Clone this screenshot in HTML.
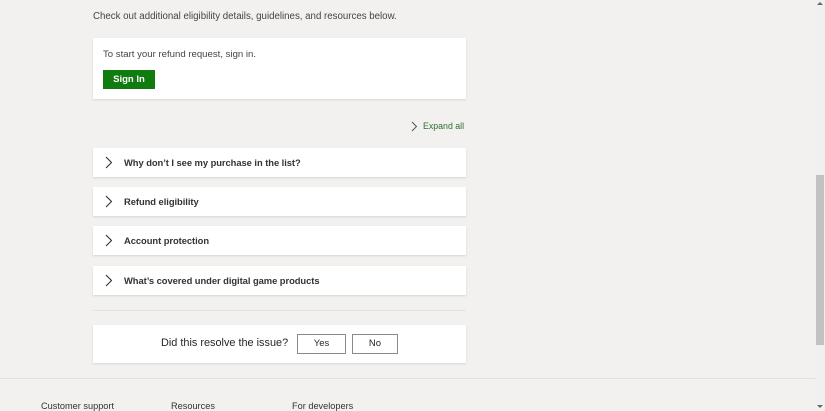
<!DOCTYPE html>
<html><head><meta charset="utf-8"><style>
*{margin:0;padding:0;box-sizing:border-box}
body{width:825px;height:411px;overflow:hidden;background:#f2f1f0;font-family:"Liberation Sans",sans-serif;color:#262626;position:relative}
.abs{position:absolute}
.card{position:absolute;left:93px;width:373px;background:#fff;box-shadow:0 1px 2px rgba(0,0,0,.12)}
.acc{height:29px;font-size:9.4px;font-weight:bold;color:#333;letter-spacing:-0.05px}
.acc span{position:absolute;left:31px;top:9px}
.acc svg{position:absolute;left:12px;top:8px}
.btn{position:absolute;border:1px solid #8a8a8a;background:#fff;font-size:9.5px;text-align:center;line-height:18px;height:20px}
</style></head><body>
<div class="abs" style="left:93px;top:11px;font-size:9.7px;color:#444">Check out additional eligibility details, guidelines, and resources below.</div>
<div class="card" style="top:38px;height:61px">
  <div class="abs" style="left:10px;top:11px;font-size:9.6px;color:#444">To start your refund request, sign in.</div>
  <div class="abs" style="left:10px;top:32px;width:52px;height:19px;background:#107c10;color:#fff;font-size:9.5px;font-weight:bold;text-align:center;line-height:19px">Sign In</div>
</div>
<svg class="abs" style="left:410px;top:121px" width="8" height="11"><path d="M2 1l4.5 4.5L2 10" fill="none" stroke="#555" stroke-width="1"/></svg>
<div class="abs" style="left:423px;top:121px;font-size:8.8px;color:#2f6e2f">Expand all</div>
<div class="card acc" style="top:148px"><svg width="8" height="13"><path d="M1 1l5.5 5.5L1 12" fill="none" stroke="#333" stroke-width="1.1"/></svg><span>Why don’t I see my purchase in the list?</span></div>
<div class="card acc" style="top:187px"><svg width="8" height="13"><path d="M1 1l5.5 5.5L1 12" fill="none" stroke="#333" stroke-width="1.1"/></svg><span>Refund eligibility</span></div>
<div class="card acc" style="top:226px"><svg width="8" height="13"><path d="M1 1l5.5 5.5L1 12" fill="none" stroke="#333" stroke-width="1.1"/></svg><span>Account protection</span></div>
<div class="card acc" style="top:266px"><svg width="8" height="13"><path d="M1 1l5.5 5.5L1 12" fill="none" stroke="#333" stroke-width="1.1"/></svg><span>What’s covered under digital game products</span></div>
<div class="abs" style="left:93px;top:310px;width:373px;height:1px;background:#e4e3e2"></div>
<div class="card" style="top:325px;height:38px">
  <div class="abs" style="left:68px;top:12px;font-size:10.9px;color:#262626">Did this resolve the issue?</div>
  <div class="btn" style="left:204px;top:9px;width:49px">Yes</div>
  <div class="btn" style="left:259px;top:9px;width:46px">No</div>
</div>
<div class="abs" style="left:0;top:378px;width:815px;height:1px;background:#e2e1e0"></div>
<div class="abs" style="left:41px;top:401px;font-size:9.2px;color:#333">Customer support</div>
<div class="abs" style="left:171px;top:401px;font-size:9.2px;color:#333">Resources</div>
<div class="abs" style="left:292px;top:401px;font-size:9.2px;color:#333">For developers</div>
<div class="abs" style="left:815px;top:0;width:10px;height:411px;background:#f0f0f0"></div>
<div class="abs" style="left:816px;top:175px;width:8px;height:170px;background:#c2c2c2"></div>
<div class="abs" style="left:817px;top:2px;width:0;height:0;border-left:3px solid transparent;border-right:3px solid transparent;border-bottom:3px solid #666"></div>
<div class="abs" style="left:817px;top:405px;width:0;height:0;border-left:3px solid transparent;border-right:3px solid transparent;border-top:3px solid #666"></div>
</body></html>
